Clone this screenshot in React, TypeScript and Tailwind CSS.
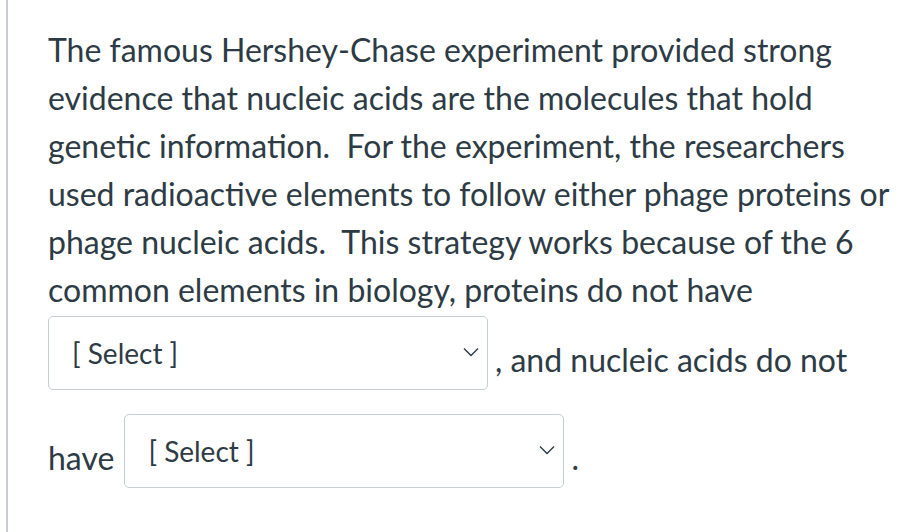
import React from 'react'

const Select: React.FC<{ className?: string }> = ({ className = '' }) => (
  <div className={`flex h-[74px] w-[440px] shrink-0 items-start justify-between rounded-[5px] border border-[#c7cdd1] bg-white pl-[23px] pr-[8px] pt-[17px] ${className}`}>
    <span className="text-[28px] leading-[38px]">[ Select ]</span>
    <svg width="16" height="10" viewBox="0 0 16 10" className="mt-[13px]" fill="none">
      <path d="M1 1.5l7 7 7-7" stroke="#2d3b45" strokeWidth="1.4" />
    </svg>
  </div>
)

export default function App() {
  return (
    <div className="h-[532px] w-[918px] overflow-hidden bg-white pl-[6px] text-[#2d3b45]" style={{ fontFamily: 'Lato, "Open Sans", sans-serif' }}>
      <div className="h-full border-l-2 border-[#c7cdd1] pl-[40px] pt-[26px]">
        <p className="text-[32px] leading-[48px]">
          The famous Hershey-Chase experiment provided strong<br />
          evidence that nucleic acids are the molecules that hold<br />
          genetic information.&nbsp; For the experiment, the researchers<br />
          used radioactive elements to follow either phage proteins or<br />
          phage nucleic acids.&nbsp; This strategy works because of the 6<br />
          common elements in biology, proteins do not have
        </p>
        <div className="mt-[2px] flex items-start">
          <Select />
          <span className="ml-[7px] mt-[20px] text-[32px] leading-[48px]">, and nucleic acids do not</span>
        </div>
        <div className="mt-[24px] flex items-start">
          <span className="mt-[20px] mr-[10px] text-[32px] leading-[48px]">have</span>
          <Select className="w-[439px]" />
          <span className="mt-[20px] ml-[7px] text-[32px] leading-[48px]">.</span>
        </div>
      </div>
    </div>
  )
}
